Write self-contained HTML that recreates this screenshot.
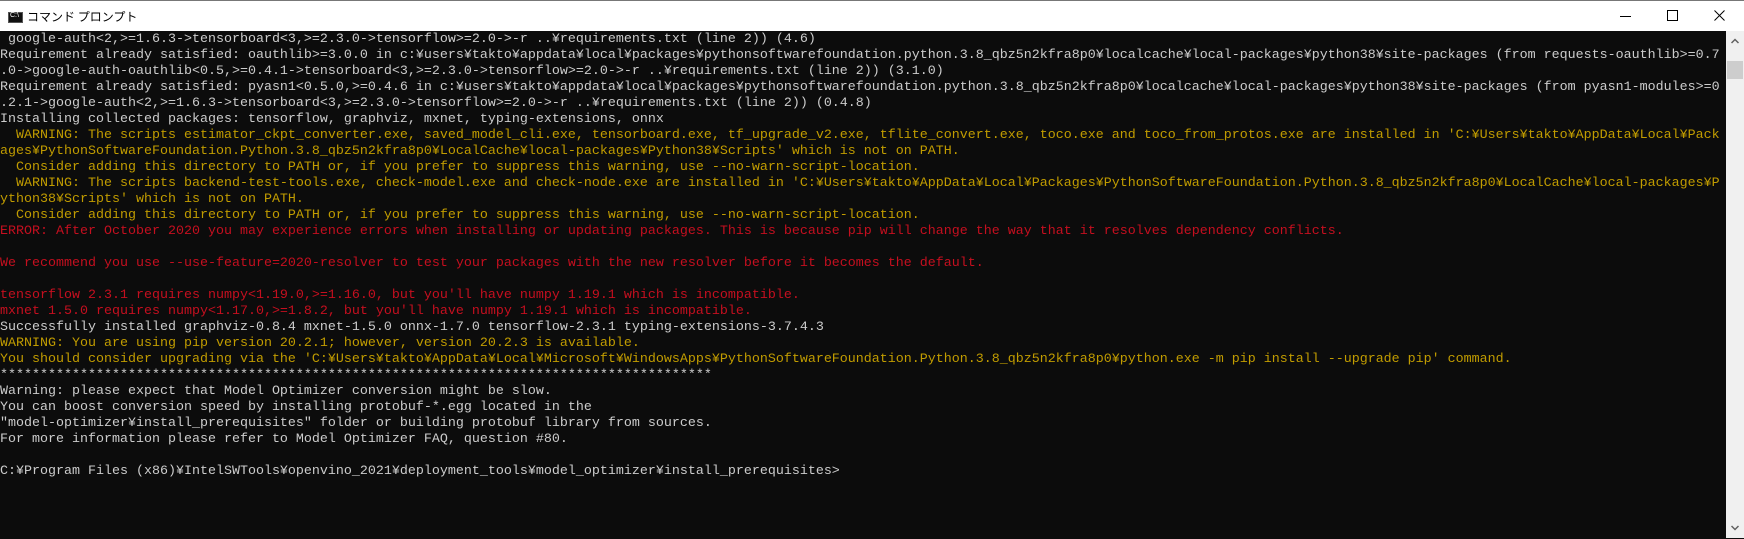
<!DOCTYPE html>
<html><head><meta charset="utf-8"><style>
html,body{margin:0;padding:0;width:1744px;height:539px;overflow:hidden;background:#0c0c0c}
#title{position:absolute;left:0;top:0;width:1744px;height:31px;background:#fff;border-top:1px solid #777;box-sizing:border-box}
#title .t{position:absolute;left:27px;top:7px;font:12px "Noto Sans CJK JP","Liberation Sans",sans-serif;color:#000}
#icon{position:absolute;left:8px;top:11px;width:13px;height:9px;background:#111;border:1px solid #555}
#icon span{position:absolute;left:1px;top:-1px;font:7px "Liberation Sans",sans-serif;color:#fff}
#con{position:absolute;left:0;top:32px;width:1726px;height:507px;overflow:hidden;font-family:"Liberation Mono",monospace;font-size:13.33px;line-height:16px;color:#cccccc;white-space:pre}
.y{color:#c19c00}.r{color:#c50f1f}
#sb{position:absolute;left:1726px;top:31px;width:18px;height:507px;background:#f0f0f0}
#thumb{position:absolute;left:1px;top:30px;width:16px;height:18px;background:#cdcdcd}
</style></head><body>
<div id="title"><div id="icon"><span>C:\</span></div><div class="t">コマンド プロンプト</div>
<svg style="position:absolute;left:1620px;top:8px" width="12" height="14"><line x1="0" y1="7.5" x2="11" y2="7.5" stroke="#000"/></svg>
<svg style="position:absolute;left:1667px;top:9px" width="12" height="12"><rect x="0.5" y="0.5" width="10" height="10" fill="none" stroke="#000"/></svg>
<svg style="position:absolute;left:1714px;top:9px" width="12" height="12"><path d="M0.5 0.5L10.5 10.5M10.5 0.5L0.5 10.5" stroke="#000"/></svg>
</div>
<div id="con"> google-auth&lt;2,&gt;=1.6.3-&gt;tensorboard&lt;3,&gt;=2.3.0-&gt;tensorflow&gt;=2.0-&gt;-r ..¥requirements.txt (line 2)) (4.6)
Requirement already satisfied: oauthlib&gt;=3.0.0 in c:¥users¥takto¥appdata¥local¥packages¥pythonsoftwarefoundation.python.3.8_qbz5n2kfra8p0¥localcache¥local-packages¥python38¥site-packages (from requests-oauthlib&gt;=0.7
.0-&gt;google-auth-oauthlib&lt;0.5,&gt;=0.4.1-&gt;tensorboard&lt;3,&gt;=2.3.0-&gt;tensorflow&gt;=2.0-&gt;-r ..¥requirements.txt (line 2)) (3.1.0)
Requirement already satisfied: pyasn1&lt;0.5.0,&gt;=0.4.6 in c:¥users¥takto¥appdata¥local¥packages¥pythonsoftwarefoundation.python.3.8_qbz5n2kfra8p0¥localcache¥local-packages¥python38¥site-packages (from pyasn1-modules&gt;=0
.2.1-&gt;google-auth&lt;2,&gt;=1.6.3-&gt;tensorboard&lt;3,&gt;=2.3.0-&gt;tensorflow&gt;=2.0-&gt;-r ..¥requirements.txt (line 2)) (0.4.8)
Installing collected packages: tensorflow, graphviz, mxnet, typing-extensions, onnx
<span class="y">  WARNING: The scripts estimator_ckpt_converter.exe, saved_model_cli.exe, tensorboard.exe, tf_upgrade_v2.exe, tflite_convert.exe, toco.exe and toco_from_protos.exe are installed in 'C:¥Users¥takto¥AppData¥Local¥Pack
ages¥PythonSoftwareFoundation.Python.3.8_qbz5n2kfra8p0¥LocalCache¥local-packages¥Python38¥Scripts' which is not on PATH.
  Consider adding this directory to PATH or, if you prefer to suppress this warning, use --no-warn-script-location.
  WARNING: The scripts backend-test-tools.exe, check-model.exe and check-node.exe are installed in 'C:¥Users¥takto¥AppData¥Local¥Packages¥PythonSoftwareFoundation.Python.3.8_qbz5n2kfra8p0¥LocalCache¥local-packages¥P
ython38¥Scripts' which is not on PATH.
  Consider adding this directory to PATH or, if you prefer to suppress this warning, use --no-warn-script-location.</span>
<span class="r">ERROR: After October 2020 you may experience errors when installing or updating packages. This is because pip will change the way that it resolves dependency conflicts.

We recommend you use --use-feature=2020-resolver to test your packages with the new resolver before it becomes the default.

tensorflow 2.3.1 requires numpy&lt;1.19.0,&gt;=1.16.0, but you'll have numpy 1.19.1 which is incompatible.
mxnet 1.5.0 requires numpy&lt;1.17.0,&gt;=1.8.2, but you'll have numpy 1.19.1 which is incompatible.</span>
Successfully installed graphviz-0.8.4 mxnet-1.5.0 onnx-1.7.0 tensorflow-2.3.1 typing-extensions-3.7.4.3
<span class="y">WARNING: You are using pip version 20.2.1; however, version 20.2.3 is available.
You should consider upgrading via the 'C:¥Users¥takto¥AppData¥Local¥Microsoft¥WindowsApps¥PythonSoftwareFoundation.Python.3.8_qbz5n2kfra8p0¥python.exe -m pip install --upgrade pip' command.</span>
*****************************************************************************************
Warning: please expect that Model Optimizer conversion might be slow.
You can boost conversion speed by installing protobuf-*.egg located in the
"model-optimizer¥install_prerequisites" folder or building protobuf library from sources.
For more information please refer to Model Optimizer FAQ, question #80.

C:¥Program Files (x86)¥IntelSWTools¥openvino_2021¥deployment_tools¥model_optimizer¥install_prerequisites&gt;</div>
<div id="sb"><div id="thumb"></div>
<svg style="position:absolute;left:5px;top:7px" width="8" height="6"><path d="M0.5 5L4 1.5L7.5 5" fill="none" stroke="#606060" stroke-width="1.5"/></svg>
<svg style="position:absolute;left:5px;top:494px" width="8" height="6"><path d="M0.5 1L4 4.5L7.5 1" fill="none" stroke="#606060" stroke-width="1.5"/></svg>
</div>
</body></html>
